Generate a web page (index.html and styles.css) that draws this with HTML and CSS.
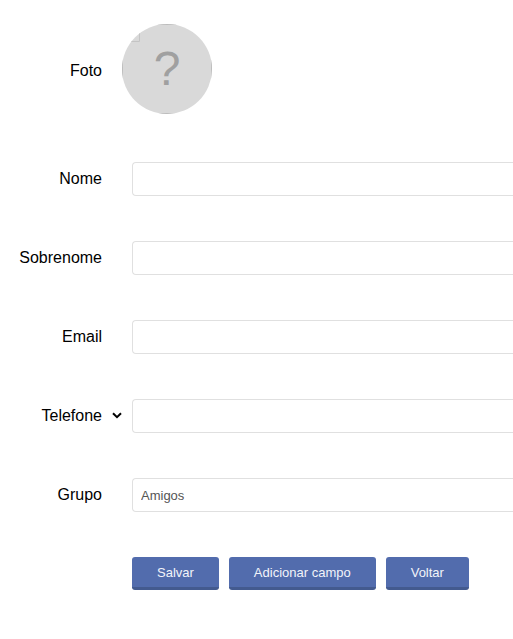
FILE: index.html
```html
<!DOCTYPE html>
<html lang="pt">
<head>
  <meta charset="UTF-8">
  <meta name="viewport" content="width=device-width, initial-scale=1.0">
  <title>Contato</title>
  <link rel="stylesheet" href="styles.css">
</head>
<body>
  <form class="contact-form">
    <div class="form-row photo-row">
      <label class="form-label">Foto</label>
      <div class="avatar">
        <svg class="avatar-corner" width="18" height="18" viewBox="0 0 18 18">
          <path d="M0 17.5H17.5V0" fill="none" stroke="#c4c4c4"/>
        </svg>
        <span class="avatar-mark">?</span>
      </div>
    </div>

    <div class="form-row">
      <label class="form-label" for="nome">Nome</label>
      <input class="form-input" type="text" id="nome">
    </div>
    <div class="form-row">
      <label class="form-label" for="sobrenome">Sobrenome</label>
      <input class="form-input" type="text" id="sobrenome">
    </div>
    <div class="form-row">
      <label class="form-label" for="email">Email</label>
      <input class="form-input" type="text" id="email">
    </div>
    <div class="form-row">
      <label class="form-label" for="telefone">Telefone</label>
      <svg class="chevron" width="10" height="7" viewBox="0 0 10 7">
        <path d="M1 1.2L5 5.2L9 1.2" fill="none" stroke="#000" stroke-width="2"/>
      </svg>
      <input class="form-input" type="text" id="telefone">
    </div>
    <div class="form-row">
      <label class="form-label" for="grupo">Grupo</label>
      <input class="form-input" type="text" id="grupo" value="Amigos">
    </div>

    <div class="form-actions">
      <button class="btn" type="button">Salvar</button>
      <button class="btn" type="button">Adicionar campo</button>
      <button class="btn" type="button">Voltar</button>
    </div>
  </form>
</body>
</html>
```

FILE: styles.css
```css
body {
  margin: 0;
  background-color: white;
  font-family: "Liberation Sans", Arial, sans-serif;
  color: #000;
}
.contact-form {
  display: flex;
  flex-direction: column;
  gap: 45px;
  padding-top: 24px;
}
.form-row {
  position: relative;
  display: flex;
  align-items: center;
}
.photo-row {
  margin-bottom: 3px;
}
.form-label {
  flex: none;
  width: 102px;
  margin-right: 30px;
  text-align: right;
  font-size: 16px;
  line-height: 18px;
}
.photo-row .form-label {
  margin-right: 20px;
  padding-top: 4px;
}
.form-input {
  flex: 1;
  min-width: 0;
  height: 34px;
  padding: 0 8px;
  border: 1px solid #e0e0e0;
  border-right: none;
  border-radius: 4px 0 0 4px;
  box-sizing: border-box;
  font-family: inherit;
  font-size: 13px;
  color: #555;
  background-color: white;
}
.chevron {
  position: absolute;
  left: 112px;
  top: 13px;
}
.avatar {
  position: relative;
  width: 90px;
  height: 90px;
  border-radius: 50%;
  overflow: hidden;
  background-color: #d9d9d9;
  display: flex;
  align-items: center;
  justify-content: center;
}
.avatar::after {
  content: "";
  position: absolute;
  top: 0;
  right: 0;
  bottom: 0;
  left: 0;
  border: 1px solid #bdbdbd;
}
.avatar-corner {
  position: absolute;
  left: 0;
  top: 0;
}
.avatar-mark {
  font-size: 48px;
  line-height: 1;
  color: #a0a0a0;
}
.form-actions {
  display: flex;
  gap: 10px;
  margin-left: 132px;
}
.btn {
  height: 33px;
  padding: 0 25px;
  border: none;
  border-bottom: 3px solid #435a8f;
  border-radius: 3px;
  background-color: #526cad;
  color: #f2f4fa;
  font-family: inherit;
  font-size: 13px;
  cursor: pointer;
}
```
